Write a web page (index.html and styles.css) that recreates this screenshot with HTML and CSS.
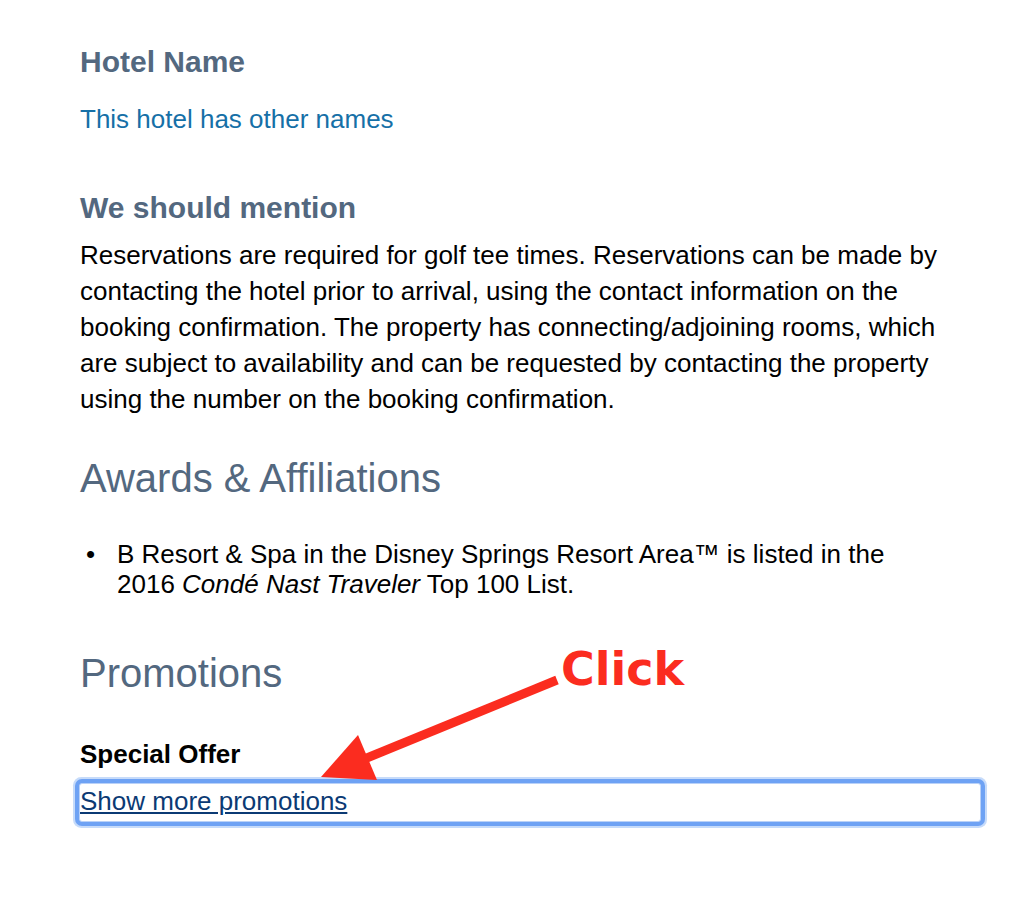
FILE: index.html
```html
<!DOCTYPE html>
<html lang="en">
<head>
  <meta charset="UTF-8">
  <meta name="viewport" content="width=device-width, initial-scale=1.0">
  <title>Hotel Details</title>
  <link rel="stylesheet" href="styles.css">
</head>
<body>

<div id="hotel-info">
  <h2 class="sub-title first">Hotel Name</h2>
  <p class="other-names">This hotel has other names</p>

  <h2 class="sub-title mention">We should mention</h2>
  <p class="mention-text">Reservations are required for golf tee times. Reservations can be made by contacting the hotel prior to arrival, using the contact information on the booking confirmation. The property has connecting/adjoining rooms, which are subject to availability and can be requested by contacting the property using the number on the booking confirmation.</p>

  <h1 class="section-title awards">Awards &amp; Affiliations</h1>
  <ul class="awards-list">
    <li>B Resort &amp; Spa in the Disney Springs Resort Area™ is listed in the 2016 <em>Condé Nast Traveler</em> Top 100 List.</li>
  </ul>

  <h1 class="section-title promos">Promotions</h1>
  <h3 class="offer">Special Offer</h3>
  <button class="show-more" type="button">Show more promotions</button>
</div>

<!-- annotation drawn over the page -->
<svg class="callout" width="1034" height="898" viewBox="0 0 1034 898">
  <line x1="557" y1="680" x2="362" y2="760" stroke="#fb2c1f" stroke-width="9"/>
  <polygon points="321,777 358,735 377,780" fill="#fb2c1f"/>
  <text class="callout-text" x="561" y="685">Click</text>
</svg>

</body>
</html>
```

FILE: styles.css
```css
body {
  margin: 0;
  padding: 0;
  font-family: 'Liberation Sans', Arial, sans-serif;
  color: #000;
  background-color: #fff;
  position: relative;
}

#hotel-info {
  width: 904px;
  padding: 44px 0 60px 80px;
}

.sub-title {
  font-size: 30px;
  font-weight: bold;
  line-height: 36px;
  color: #53687f;
  margin: 0;
}

.sub-title.mention {
  margin-top: 53px;
}

.other-names {
  font-size: 26px;
  line-height: 36px;
  color: #1670a7;
  margin: 21px 0 0 0;
}

.mention-text {
  width: 880px;
  font-size: 26px;
  line-height: 36px;
  margin: 11px 0 0 0;
}

.section-title {
  font-size: 40px;
  font-weight: normal;
  line-height: 48px;
  color: #53687f;
  margin: 0;
}

.section-title.awards {
  margin-top: 37px;
}

.section-title.promos {
  margin-top: 50px;
}

.awards-list {
  list-style: none;
  margin: 37px 0 0 0;
  padding: 0 70px 0 37px;
  font-size: 26px;
  line-height: 30px;
}

.awards-list li::before {
  content: "\2022";
  display: inline-block;
  width: 31px;
  margin-left: -31px;
}

.offer {
  font-size: 26px;
  font-weight: bold;
  line-height: 30px;
  margin: 42px 0 0 0;
}

.show-more {
  display: block;
  width: 902px;
  margin: 14px 0 0 -1px;
  padding: 0 0 3px 0;
  text-align: left;
  font-family: 'Liberation Sans', Arial, sans-serif;
  font-size: 26px;
  line-height: 34px;
  color: #0b3a74;
  text-decoration: underline;
  background: #fff;
  border: 1px solid #b9d1f8;
  border-radius: 3px;
  box-shadow: 0 0 0 4px #6ea2f4, 0 0 0 6px #c6dbfa;
  cursor: pointer;
}

.callout {
  position: absolute;
  top: 0;
  left: 0;
  pointer-events: none;
}

.callout-text {
  font-family: 'DejaVu Sans', sans-serif;
  font-weight: bold;
  font-size: 46px;
  fill: #fb2c1f;
}
```
